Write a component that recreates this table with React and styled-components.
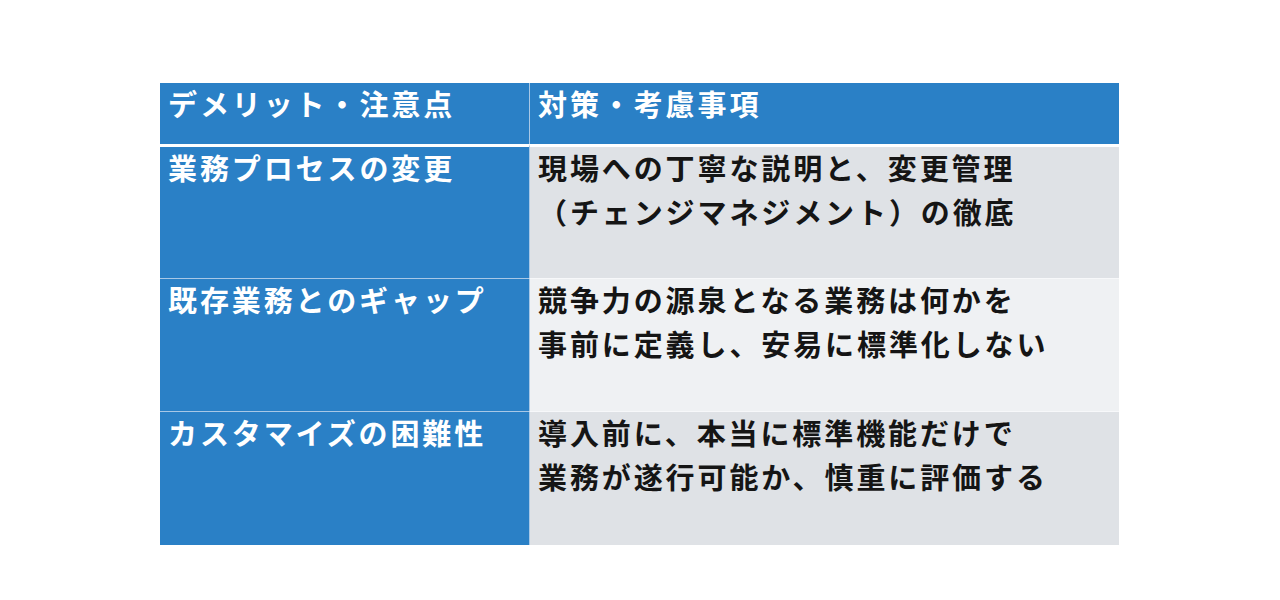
import React from "react";
import styled, { createGlobalStyle } from "styled-components";

const Global = createGlobalStyle`
  html, body { margin: 0; padding: 0; background: #ffffff; }
  body { font-family: "Noto Sans CJK JP", "Noto Sans", sans-serif; }
`;

const Page = styled.div`
  width: 1280px;
  height: 600px;
  padding: 83px 0 0 160px;
  box-sizing: border-box;
`;

const Table = styled.div`
  display: grid;
  grid-template-columns: 369px 590px;
  grid-template-rows: 61px 134px 133px 134px;
  width: 959px;
`;

const Cell = styled.div`
  box-sizing: border-box;
  display: flex;
  flex-direction: column;
  gap: 6px;
  padding: 1px 0 0 8px;
  color: ${(p) => (p.$blue ? "#ffffff" : "#151515")};
  background: ${(p) => (p.$blue ? "#2a80c6" : p.$alt ? "#eff1f3" : "#dfe2e6")};
  border-top: ${(p) =>
    p.$first
      ? "none"
      : p.$afterHead
      ? "3px solid #ffffff"
      : p.$blue
      ? "1px solid #a8c8e6"
      : "1px solid #f7f8fa"};
  border-left: ${(p) => (p.$right ? "1px solid #a8c8e6" : "none")};
`;

const Line = styled.div`
  font-size: 29px;
  font-weight: 700;
  line-height: 38px;
  letter-spacing: 2.9px;
  white-space: nowrap;
`;

const rows = [
  ["業務プロセスの変更", ["現場への丁寧な説明と、変更管理", "（チェンジマネジメント）の徹底"]],
  ["既存業務とのギャップ", ["競争力の源泉となる業務は何かを", "事前に定義し、安易に標準化しない"]],
  ["カスタマイズの困難性", ["導入前に、本当に標準機能だけで", "業務が遂行可能か、慎重に評価する"]],
];

export default function App() {
  return (
    <>
      <Global />
      <Page>
        <Table>
          <Cell $blue $first><Line>デメリット・注意点</Line></Cell>
          <Cell $blue $first $right><Line>対策・考慮事項</Line></Cell>
          {rows.map(([a, lines], i) => (
            <React.Fragment key={i}>
              <Cell $blue $afterHead={i === 0}><Line>{a}</Line></Cell>
              <Cell $right $alt={i % 2 === 1} $afterHead={i === 0}>
                {lines.map((l) => (
                  <Line key={l}>{l}</Line>
                ))}
              </Cell>
            </React.Fragment>
          ))}
        </Table>
      </Page>
    </>
  );
}
